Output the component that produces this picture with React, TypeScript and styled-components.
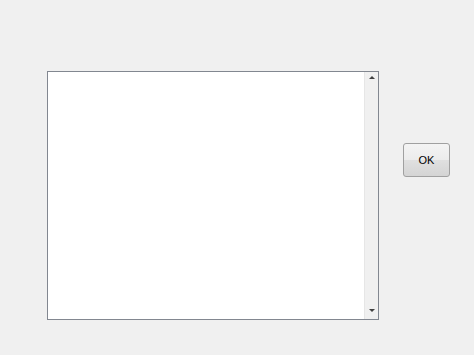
import React from 'react';
import styled, { createGlobalStyle } from 'styled-components';

const Global = createGlobalStyle`
  html, body {
    margin: 0;
    padding: 0;
    background: #f0f0f0;
    font-family: "Liberation Sans", Arial, sans-serif;
  }
`;

const Page = styled.div`
  width: 474px;
  height: 355px;
  box-sizing: border-box;
  padding: 71px 0 0 47px;
  display: flex;
  flex-direction: row;
  align-items: flex-start;
  gap: 24px;
`;

const ListBox = styled.div`
  width: 332px;
  height: 249px;
  box-sizing: border-box;
  border: 1px solid #828790;
  background: #ffffff;
  display: flex;
  flex-direction: row;
`;

const ListArea = styled.div`
  flex: 1;
`;

const ScrollTrack = styled.div`
  width: 13px;
  background: #f0f0f0;
  border-left: 1px solid #e6e6e6;
  display: flex;
  flex-direction: column;
  justify-content: space-between;
  align-items: center;
  padding: 4px 0 7px;
`;

const Arrow = styled.div<{ down?: boolean }>`
  width: 0;
  height: 0;
  border-left: 3px solid transparent;
  border-right: 3px solid transparent;
  ${({ down }) =>
    down ? 'border-top: 3px solid #404040;' : 'border-bottom: 3px solid #404040;'}
`;

const Button = styled.button`
  margin-top: 72px;
  width: 47px;
  height: 34px;
  box-sizing: border-box;
  border: 1px solid #a0a0a0;
  border-radius: 3px;
  background: linear-gradient(#f4f4f4, #ececec 50%, #e0e0e0 50%, #d4d4d4);
  font-family: "Liberation Sans", Arial, sans-serif;
  font-size: 11px;
  color: #000;
  padding: 0;
`;

export default function App() {
  return (
    <>
      <Global />
      <Page>
        <ListBox>
          <ListArea />
          <ScrollTrack>
            <Arrow />
            <Arrow down />
          </ScrollTrack>
        </ListBox>
        <Button>OK</Button>
      </Page>
    </>
  );
}
